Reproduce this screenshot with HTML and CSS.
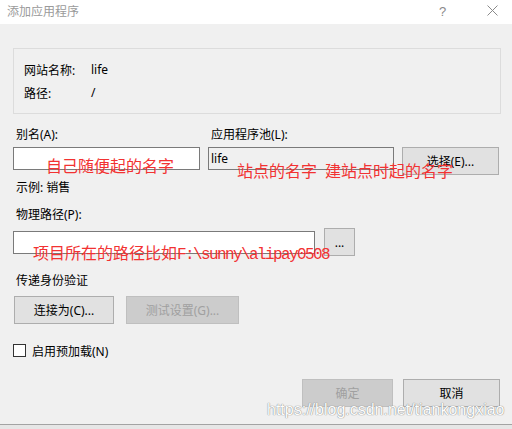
FILE: index.html
```html
<!DOCTYPE html>
<html lang="zh-CN">
<head>
<meta charset="utf-8">
<title>添加应用程序</title>
<link rel="stylesheet" href="styles.css">
</head>
<body>
<div class="window">
  <div class="titlebar">
    <span class="title">添加应用程序</span>
    <span class="help">?</span>
    <svg class="close" width="11" height="11" viewBox="0 0 11 11"><path d="M0.5 0.5 L10.5 10.5 M10.5 0.5 L0.5 10.5" stroke="#8a8a8a" stroke-width="1" fill="none"/></svg>
  </div>
  <div class="content">
    <div class="groupbox">
      <div class="info-row"><span class="info-label">网站名称:</span><span>life</span></div>
      <div class="info-row"><span class="info-label">路径:</span><span>/</span></div>
    </div>

    <div class="pair-row">
      <div class="alias-col">
        <div class="field-label">别名(A):</div>
        <div class="textbox alias-box"></div>
        <div class="hint">示例: 销售</div>
      </div>
      <div class="pool-col">
        <div class="field-label">应用程序池(L):</div>
        <div class="pool-line">
          <div class="textbox readonly pool-box">life</div>
          <div class="btn select-btn">选择(E)...</div>
        </div>
      </div>
    </div>

    <div class="field-label path-label">物理路径(P):</div>
    <div class="path-line">
      <div class="textbox path-box"></div>
      <div class="btn browse-btn">...</div>
    </div>

    <div class="field-label auth-label">传递身份验证</div>
    <div class="auth-buttons">
      <div class="btn connect-btn">连接为(C)...</div>
      <div class="btn disabled test-btn">测试设置(G)...</div>
    </div>

    <div class="check-row">
      <span class="checkbox"></span>
      <span>启用预加载(N)</span>
    </div>

    <div class="footer">
      <div class="btn disabled ok-btn">确定</div>
      <div class="btn cancel-btn">取消</div>
    </div>
  </div>

  <span class="note note-alias">自己随便起的名字</span>
  <span class="note note-pool">站点的名字<span class="mono"> </span>建站点时起的名字</span>
  <span class="note note-path">项目所在的路径比如<span class="mono">F:\sunny\alipay0508</span></span>
  <span class="watermark">https://blog.csdn.net/tiankongxiao</span>
</div>
</body>
</html>
```

FILE: styles.css
```css
html, body {
  margin: 0;
  padding: 0;
}

body {
  width: 512px;
  height: 429px;
  background: #e6e6e6;
  overflow: hidden;
}

.window {
  position: relative;
  width: 512px;
  height: 424px;
  background: #f0f0f0;
  border-bottom: 1px solid #a3a3a3;
  font-family: "Noto Sans", "Noto Sans CJK SC", sans-serif;
  font-size: 12px;
  color: #000;
}

.titlebar {
  height: 24px;
  background: #fff;
  display: flex;
  align-items: center;
  padding-left: 7px;
}

.title {
  flex: 1;
  color: #9a9a9a;
  line-height: 20px;
}

.help {
  width: 10px;
  color: #8a8a8a;
  font-family: "Liberation Sans", sans-serif;
  font-size: 13px;
  line-height: 20px;
  margin-right: 38px;
}

.close {
  margin-right: 14px;
  margin-bottom: 3px;
}

.content {
  padding: 24px 11px 0 13px;
}

.groupbox {
  height: 66px;
  box-sizing: border-box;
  border: 1px solid #dcdcdc;
  padding: 9px 10px;
}

.info-row {
  display: flex;
  align-items: center;
  height: 23px;
}

.info-label {
  width: 67px;
}

.field-label {
  line-height: 16px;
  padding-left: 3px;
}

.pair-row {
  display: flex;
  gap: 8px;
  margin-top: 13px;
}

.alias-col {
  width: 187px;
}

.textbox {
  box-sizing: border-box;
  height: 23px;
  border: 1px solid #7a7a7a;
  background: #fff;
  line-height: 21px;
  padding-left: 2px;
}

.textbox.readonly {
  background: #f0f0f0;
}

.alias-box {
  margin-top: 4px;
}

.hint {
  margin-top: 10px;
  line-height: 16px;
  padding-left: 3px;
}

.pool-line {
  display: flex;
  align-items: flex-start;
  gap: 8px;
  margin-top: 4px;
}

.pool-box {
  width: 186px;
}

.btn {
  box-sizing: border-box;
  height: 28px;
  border: 1px solid #adadad;
  background: #e1e1e1;
  display: flex;
  align-items: center;
  justify-content: center;
}

.btn.disabled {
  background: #cccccc;
  border-color: #bfbfbf;
  color: #a0a0a0;
}

.select-btn {
  width: 97px;
}

.path-label {
  margin-top: 11px;
}

.path-line {
  display: flex;
  align-items: center;
  gap: 9px;
  margin-top: 5px;
}

.path-box {
  width: 302px;
}

.browse-btn {
  width: 31px;
}

.auth-label {
  margin-top: 17px;
}

.auth-buttons {
  display: flex;
  gap: 12px;
  margin-top: 7px;
  padding-left: 1px;
}

.connect-btn {
  width: 100px;
}

.test-btn {
  width: 113px;
}

.check-row {
  display: flex;
  align-items: center;
  gap: 6px;
  margin-top: 20px;
  height: 13px;
}

.checkbox {
  width: 13px;
  height: 13px;
  box-sizing: border-box;
  border: 1px solid #333;
  background: #fff;
}

.footer {
  display: flex;
  justify-content: flex-end;
  gap: 10px;
  margin-top: 22px;
  padding-right: 1px;
}

.ok-btn {
  width: 91px;
}

.cancel-btn {
  width: 97px;
}

.note {
  position: absolute;
  color: #f23232;
  font-family: "Noto Sans CJK SC", sans-serif;
  font-size: 16px;
  line-height: 16px;
  white-space: nowrap;
}

.note .mono {
  font-family: "Liberation Mono", monospace;
  letter-spacing: -1.6px;
}

.note-alias {
  left: 46px;
  top: 157px;
}

.note-pool {
  left: 237px;
  top: 162px;
}

.note-path {
  left: 33px;
  top: 244px;
}

.watermark {
  position: absolute;
  left: 267px;
  top: 402px;
  font-family: "Liberation Sans", sans-serif;
  font-size: 16px;
  line-height: 16px;
  color: #fdfdfd;
  text-shadow: 0 0 1px #7d7d7d, 0 0 1px #9a9a9a;
  white-space: nowrap;
}
```
